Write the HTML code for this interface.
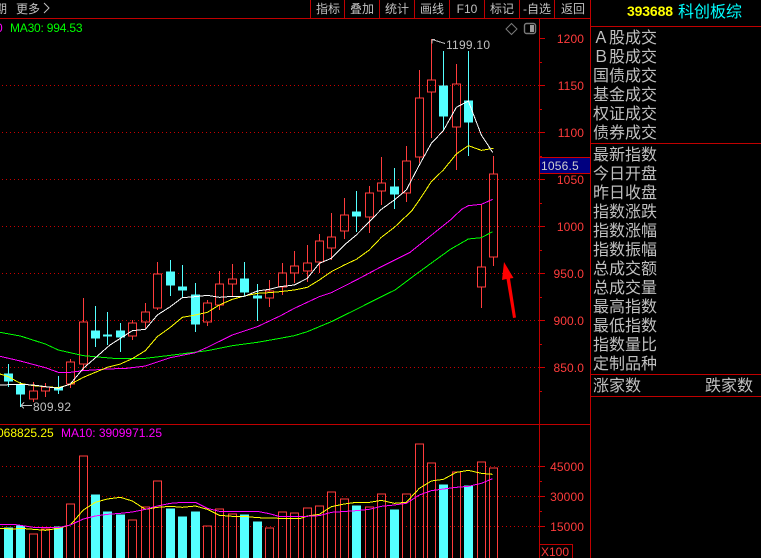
<!DOCTYPE html>
<html><head><meta charset="utf-8"><style>
html,body{margin:0;padding:0;background:#000;width:761px;height:558px;overflow:hidden}
svg{display:block}
text{font-family:"Liberation Sans","WenQuanYi Zen Hei","Noto Sans CJK SC",sans-serif}
.g{fill:#c0c0c0}
.t{font-size:12px;fill:#c0c0c0;text-anchor:middle;letter-spacing:0}
.r{font-size:16px;fill:#c0c0c0}
.a{font-size:12px;fill:#ff3c3c;text-anchor:end;letter-spacing:.1px}
</style></head><body>
<svg width="761" height="558" viewBox="0 0 761 558" xmlns="http://www.w3.org/2000/svg">
<rect width="761" height="558" fill="#000"/>
<g stroke="#c80000" stroke-width="1" stroke-dasharray="1 3" shape-rendering="crispEdges">
<path d="M2 85.5H540M2 132.5H540M2 179.5H540M2 226.5H540M2 273.5H540M2 320.5H540M2 367.5H540M2 466.5H540M2 496.5H540M2 526.5H540"/>
</g>
<g stroke="#c00000" stroke-width="1" fill="none" shape-rendering="crispEdges">
<path d="M0 18.5H590M0 424.5H590M539.5 18V558M590.5 0V558M310.5 0V18M344.5 0V18M379.5 0V18M414.5 0V18M449.5 0V18M484.5 0V18M519.5 0V18M554.5 0V18M590 26.5H761M590 143.5H761M590 374.5H761M590 396.5H761"/>
<path stroke="#d00000" d="M540 38.5h5M540 62.5h2M540 85.5h5M540 109.5h2M540 132.5h5M540 156.5h2M540 179.5h5M540 203.5h2M540 226.5h5M540 250.5h2M540 273.5h5M540 297.5h2M540 320.5h5M540 344.5h2M540 367.5h5M540 391.5h2M540 466.5h5M540 481.5h2M540 496.5h5M540 511.5h2M540 526.5h5"/>
<rect x="539.5" y="544.5" width="33" height="14"/>
</g>
<!-- volume -->
<g shape-rendering="crispEdges">
<path fill="#54ffff" stroke="#54ffff" stroke-width="1" d="M4.5 528h8v31h-8zM16.5 526h8v33h-8zM54.5 527h8v32h-8zM91.5 495h8v64h-8zM103.5 512h8v47h-8zM116.5 515h8v44h-8zM166.5 509h8v50h-8zM178.5 517h8v42h-8zM191.5 512h8v47h-8zM240.5 515h8v44h-8zM253.5 522h8v37h-8zM352.5 506h8v53h-8zM390.5 510h8v49h-8zM439.5 485h8v74h-8zM464.5 486h8v73h-8z"/>
<path fill="none" stroke="#ff3c3c" stroke-width="1" d="M29.5 534h8v25h-8zM41.5 529h8v30h-8zM66.5 504h8v55h-8zM79.5 456h8v103h-8zM128.5 520h8v39h-8zM141.5 507h8v52h-8zM153.5 481h8v78h-8zM203.5 526h8v33h-8zM215.5 509h8v50h-8zM228.5 514h8v45h-8zM265.5 528h8v31h-8zM278.5 512h8v47h-8zM290.5 513h8v46h-8zM303.5 508h8v51h-8zM315.5 506h8v53h-8zM327.5 492h8v67h-8zM340.5 499h8v60h-8zM365.5 507h8v52h-8zM377.5 494h8v65h-8zM402.5 494h8v65h-8zM415.5 444h8v115h-8zM427.5 463h8v96h-8zM452.5 472h8v87h-8zM477.5 462h8v97h-8zM489.5 468h8v91h-8z"/>
</g>
<g fill="none" stroke-width="3" shape-rendering="crispEdges" transform="translate(0,420) scale(.33333)">
<polyline stroke="#ffff00" points="0,325 40,327 61,325 100,328 136,331 175,325 211,315 250,270 286,247 322,237 361,232 397,243 436,268 472,262 511,259 547,262 586,258 622,268 658,286 697,289 733,289 772,293 840,295 900,296 922,288 958,283 994,260 1033,252 1069,247 1108,247 1144,241 1183,250 1219,247 1258,205 1294,183 1330,178 1369,157 1405,151 1444,160 1478,163"/>
<polyline stroke="#ff00ff" points="0,313 40,313 61,316 100,322 175,323 211,315 250,297 286,288 322,283 361,280 397,276 436,268 472,258 511,250 547,247 586,247 622,265 658,274 772,274 808,281 840,290 900,290 958,287 994,277 1069,272 1108,268 1144,259 1183,255 1219,250 1258,225 1294,212 1330,207 1369,202 1405,199 1444,190 1478,176"/>
</g>
<!-- candles -->
<g shape-rendering="crispEdges">
<path fill="#54ffff" stroke="#54ffff" stroke-width="1" d="M8.5 364V387M4.5 374h8v7h-8zM20.5 382V407M16.5 385h8v9h-8zM58.5 376V394M54.5 388h8v2h-8zM95.5 306V347M91.5 331h8v7h-8zM107.5 312V345M103.5 335h8v1h-8zM120.5 323V352M116.5 331h8v6h-8zM170.5 260V296M166.5 272h8v13h-8zM182.5 265V297M178.5 287h8v3h-8zM195.5 283V332M191.5 295h8v29h-8zM244.5 262V296M240.5 279h8v13h-8zM257.5 284V321M253.5 296h8v2h-8zM356.5 191V232M352.5 212h8v4h-8zM394.5 168V209M390.5 187h8v7h-8zM443.5 51V130M439.5 86h8v30h-8zM468.5 51V156M464.5 101h8v21h-8z"/>
<path fill="none" stroke="#ff3c3c" stroke-width="1" d="M33.5 382V391M33.5 399V402M29.5 391h8v8h-8zM45.5 383V387M45.5 391V397M41.5 387h8v4h-8zM70.5 359V362M70.5 384V388M66.5 362h8v22h-8zM83.5 298V322M83.5 364V370M79.5 322h8v42h-8zM132.5 320V323M132.5 336V340M128.5 323h8v13h-8zM145.5 303V312M145.5 322V328M141.5 312h8v10h-8zM157.5 262V274M157.5 308V310M153.5 274h8v34h-8zM207.5 300V303M207.5 322V326M203.5 303h8v19h-8zM219.5 271V284M219.5 305V310M215.5 284h8v21h-8zM232.5 264V279M232.5 284V296M228.5 279h8v5h-8zM269.5 280V291M269.5 298V307M265.5 291h8v7h-8zM282.5 263V273M282.5 287V295M278.5 273h8v14h-8zM294.5 251V266M294.5 273V283M290.5 266h8v7h-8zM307.5 245V263M307.5 271V282M303.5 263h8v8h-8zM319.5 234V241M319.5 262V273M315.5 241h8v21h-8zM331.5 213V237M331.5 248V260M327.5 237h8v11h-8zM344.5 198V215M344.5 231V239M340.5 215h8v16h-8zM369.5 186V193M369.5 217V233M365.5 193h8v24h-8zM381.5 157V183M381.5 191V205M377.5 183h8v8h-8zM406.5 146V161M406.5 193V202M402.5 161h8v32h-8zM419.5 70V98M419.5 157V163M415.5 98h8v59h-8zM431.5 39V80M431.5 92V138M427.5 80h8v12h-8zM456.5 64V84M456.5 127V170M452.5 84h8v43h-8zM481.5 204V267M481.5 287V308M477.5 267h8v20h-8zM493.5 156V174M493.5 257V266M489.5 174h8v83h-8z"/>
</g>
<!-- MAs -->
<g fill="none" stroke-width="3" shape-rendering="crispEdges" transform="scale(.33333)">
<polyline stroke="#00ff00" points="0,997 61,1008 136,1032 175,1050 250,1067 340,1075 436,1075 511,1066 622,1052 697,1037 772,1027 840,1015 883,1007 922,995 994,965 1069,928 1144,890 1185,870 1245,825 1300,785 1351,748 1405,717 1444,713 1478,695"/>
<polyline stroke="#ff00ff" points="0,1069 61,1083 136,1103 175,1117 211,1117 250,1112 322,1107 380,1105 436,1098 511,1073 586,1058 622,1042 697,1005 772,980 840,948 883,925 958,890 994,878 1069,840 1144,800 1230,757 1270,725 1351,660 1385,628 1405,617 1444,613 1478,598"/>
<polyline stroke="#ffff00" points="0,1122 25,1130 61,1150 100,1157 136,1160 175,1163 211,1153 250,1132 286,1117 322,1102 361,1092 397,1076 436,1052 472,1010 511,982 547,952 586,945 622,937 658,915 697,898 733,888 772,880 808,878 840,875 883,870 922,862 958,840 994,815 1033,795 1069,778 1108,750 1144,712 1183,682 1219,648 1237,630 1258,600 1294,545 1330,510 1369,462 1405,437 1444,451 1480,445"/>
<polyline stroke="#ffffff" points="0,1155 60,1153 100,1155 136,1160 175,1165 211,1152 250,1105 290,1070 330,1035 397,992 436,988 472,945 511,920 547,893 586,890 622,886 658,892 697,889 733,889 772,873 808,868 840,860 883,855 922,835 958,790 994,775 1033,735 1069,705 1108,665 1144,628 1183,600 1219,570 1258,495 1294,430 1330,392 1369,322 1405,303 1444,405 1478,457"/>
</g>
<!-- arrow -->
<polygon fill="#ff0000" points="504,262 513.5,278 510,278.5 516,317.5 513,318 506.5,279 502,280"/>
<!-- low/high markers -->
<g fill="none" stroke="#c0c0c0" stroke-width="1" shape-rendering="crispEdges">
<path d="M21 405.5H32M21 405.5l3-3M21 405.5l3 3"/>
<path d="M432 39.5l13 4M432 39.5h3M432 39.5v4"/>
</g>
<text x="33" y="411" font-size="12" fill="#c0c0c0" textLength="38">809.92</text>
<text x="446" y="49" font-size="12" fill="#c0c0c0" textLength="44">1199.10</text>
<!-- toolbar -->
<text class="g" x="-17" y="13" font-size="12">周期</text>
<text class="g" x="16" y="13" font-size="12">更多</text>
<path d="M44 3l5 5-5 5" fill="none" stroke="#c0c0c0" stroke-width="1"/>
<text class="t" x="328" y="13">指标</text>
<text class="t" x="362" y="13">叠加</text>
<text class="t" x="397" y="13">统计</text>
<text class="t" x="432" y="13">画线</text>
<text class="t" x="467" y="13">F10</text>
<text class="t" x="502" y="13">标记</text>
<text class="t" x="537" y="13">-自选</text>
<text class="t" x="573" y="13">返回</text>
<text x="-4" y="32" font-size="12" fill="#ff00ff">0</text>
<text x="10" y="32" font-size="12" fill="#00ff00" textLength="72.5">MA30: 994.53</text>
<text x="-3" y="437" font-size="12" fill="#ffff00">068825.25</text>
<text x="61" y="437" font-size="12" fill="#ff00ff" textLength="101">MA10: 3909971.25</text>
<!-- icons -->
<path d="M511.5 23.5l5.5 5.5-5.5 5.5-5.5-5.5z" fill="none" stroke="#7a7a7a" stroke-width="1"/>
<rect x="524.5" y="23.5" width="11" height="10" rx="2" fill="none" stroke="#7a7a7a" stroke-width="1.4"/>
<rect x="530" y="25" width="4" height="7" fill="#9a9a9a"/>
<!-- axis labels -->
<text class="a" x="584" y="43">1200</text>
<text class="a" x="584" y="90">1150</text>
<text class="a" x="584" y="137">1100</text>
<text class="a" x="584" y="184">1050</text>
<text class="a" x="584" y="231">1000</text>
<text class="a" x="584" y="278">950.0</text>
<text class="a" x="584" y="325">900.0</text>
<text class="a" x="584" y="372">850.0</text>
<text class="a" x="584" y="471">45000</text>
<text class="a" x="584" y="501">30000</text>
<text class="a" x="584" y="531">15000</text>
<text x="541" y="556" font-size="12" fill="#ff3c3c">X100</text>
<rect x="539.5" y="157.5" width="51" height="16" fill="#000080" stroke="#d00000" stroke-width="1" shape-rendering="crispEdges"/>
<text x="541" y="170" font-size="12" fill="#d0d0d0" letter-spacing=".2">1056.5</text>
<!-- right panel -->
<text x="627" y="16" font-size="14" font-weight="bold" fill="#ffff00" textLength="46">393688</text>
<text x="678" y="17" font-size="16" fill="#00ffff">科创板综</text>
<g class="r">
<text class="r" x="593" y="43">Ａ股成交</text>
<text class="r" x="593" y="62">Ｂ股成交</text>
<text class="r" x="593" y="81">国债成交</text>
<text class="r" x="593" y="100">基金成交</text>
<text class="r" x="593" y="119">权证成交</text>
<text class="r" x="593" y="138">债券成交</text>
<text class="r" x="593" y="160">最新指数</text>
<text class="r" x="593" y="179">今日开盘</text>
<text class="r" x="593" y="198">昨日收盘</text>
<text class="r" x="593" y="217">指数涨跌</text>
<text class="r" x="593" y="236">指数涨幅</text>
<text class="r" x="593" y="255">指数振幅</text>
<text class="r" x="593" y="274">总成交额</text>
<text class="r" x="593" y="293">总成交量</text>
<text class="r" x="593" y="312">最高指数</text>
<text class="r" x="593" y="331">最低指数</text>
<text class="r" x="593" y="350">指数量比</text>
<text class="r" x="593" y="369">定制品种</text>
<text class="r" x="593" y="391">涨家数</text>
<text class="r" x="705" y="391">跌家数</text>
</g>
</svg>
</body></html>
